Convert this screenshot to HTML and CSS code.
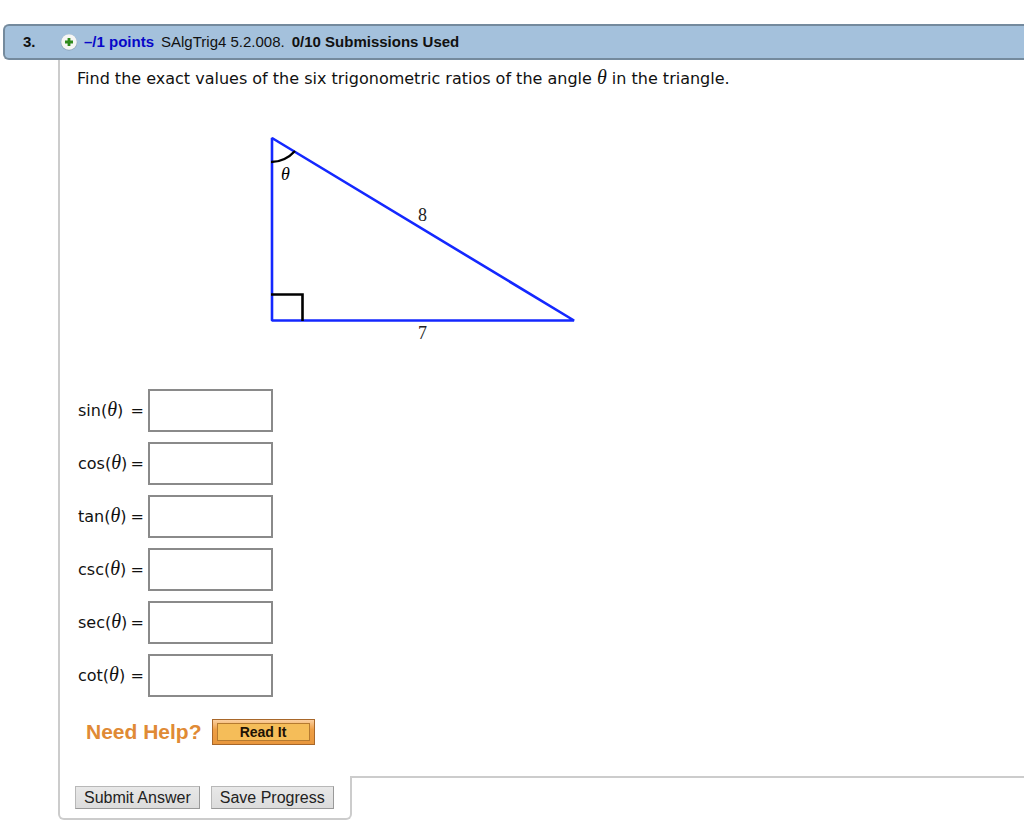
FILE: index.html
```html
<!DOCTYPE html>
<html lang="en">
<head>
<meta charset="utf-8">
<title>Question 3</title>
<link rel="stylesheet" href="styles.css">
</head>
<body>
<main class="question">
  <header class="bar">
    <span class="number">3.</span>
    <svg class="plus" viewBox="0 0 18 18" aria-hidden="true">
      <circle cx="9" cy="9.500" r="8.300" fill="#8fa8be"/>
      <circle cx="9" cy="9" r="7.800" fill="#f6f6f4"/>
      <path d="M9 5v8M5 9h8" stroke="#2f8a1c" stroke-width="2.800"/>
    </svg>
    <a class="points" href="#points">–/1 points</a>
    <span class="source">SAlgTrig4 5.2.008.</span>
    <strong class="used">0/10 Submissions Used</strong>
  </header>
  <form class="body">
    <div class="content">
      <p class="prompt">Find the exact values of the six trigonometric ratios of the angle <i class="theta">θ</i> in the triangle.</p>
      <svg class="figure" viewBox="0 0 320 224" role="img" aria-label="Right triangle with hypotenuse 8, base 7 and top angle theta">
        <path d="M12 9V191.500H314Z" fill="none" stroke="#1428ff" stroke-width="2.600" stroke-linejoin="bevel"/>
        <path d="M11 33Q25 33 35 22" fill="none" stroke="#000" stroke-width="2.400"/>
        <path d="M11 165.500H42.500V192" fill="none" stroke="#000" stroke-width="2.600"/>
        <text class="fig-theta" x="21" y="51">θ</text>
        <text class="fig-num" x="158" y="92">8</text>
        <text class="fig-num" x="158" y="210">7</text>
      </svg>
      <div class="answers">
        <label for="sin"><span>sin(<i class="theta">θ</i>)</span><span>=</span></label><input id="sin" type="text">
        <label for="cos"><span>cos(<i class="theta">θ</i>)</span><span>=</span></label><input id="cos" type="text">
        <label for="tan"><span>tan(<i class="theta">θ</i>)</span><span>=</span></label><input id="tan" type="text">
        <label for="csc"><span>csc(<i class="theta">θ</i>)</span><span>=</span></label><input id="csc" type="text">
        <label for="sec"><span>sec(<i class="theta">θ</i>)</span><span>=</span></label><input id="sec" type="text">
        <label for="cot"><span>cot(<i class="theta">θ</i>)</span><span>=</span></label><input id="cot" type="text">
      </div>
      <div class="help">
        <span class="help-title">Need Help?</span>
        <button class="read" type="button"><span>Read It</span></button>
      </div>
    </div>
    <div class="bottom">
      <div class="actions">
        <button class="action" type="button">Submit Answer</button>
        <button class="action" type="button">Save Progress</button>
      </div>
      <div class="rule"></div>
    </div>
  </form>
</main>
</body>
</html>
```
FILE: styles.css
```css
* { box-sizing: border-box; }
body {
  margin: 0;
  background: #fff;
  color: #111;
  font: 16px/24px "DejaVu Sans", Verdana, sans-serif;
}
.question { padding: 24px 0 12px 3px; }
.bar {
  display: flex;
  align-items: center;
  height: 36px;
  padding-left: 18px;
  border: 2px solid #748a9d;
  border-right: 0;
  border-radius: 6px 0 0 6px;
  background: #a4c1dc;
  font: 15px/20px "Liberation Sans", Arial, sans-serif;
  white-space: nowrap;
}
.number { width: 37px; font-weight: bold; }
.plus { width: 18px; height: 18px; margin-right: 6px; }
.points { color: #0808c8; font-weight: bold; text-decoration: none; }
.source { margin: 0 7px; }
.body { margin-left: 55px; }
.content {
  padding: 7px 0 31px 17px;
  border-left: 2px solid #ccc;
}
.prompt { margin: 0; height: 24px; line-height: 24px; }
.theta { font: italic 20px/20px "Liberation Serif", "Times New Roman", serif; }
.figure {
  display: block;
  width: 320px;
  height: 224px;
  margin: 38px 0 36px 183px;
}
.fig-theta { font: italic 18px "Liberation Serif", serif; }
.fig-num { font: 18px "Liberation Serif", serif; fill: #222; }
.answers {
  display: grid;
  grid-template-columns: 66px 125px;
  grid-auto-rows: 43px;
  column-gap: 4px;
  row-gap: 10px;
  padding-left: 1px;
  align-items: center;
}
.answers label { display: flex; justify-content: space-between; align-items: baseline; }
.answers input {
  width: 100%;
  height: 43px;
  padding: 4px 8px;
  border: 2px solid #8a8a8a;
  background: #fff;
  font: inherit;
}
.help { display: flex; align-items: center; gap: 10px; margin: 22px 0 0 9px; }
.help-title { color: #e08a35; font: bold 21px/26px "Liberation Sans", Arial, sans-serif; }
.read {
  width: 103px;
  height: 26px;
  padding: 3px 4px;
  border: 1px solid #a8672a;
  background: linear-gradient(#fbd0a0, #ee9f45 40%, #e8963c);
  color: #1c1204;
  font: bold 14px/16px "Liberation Sans", Arial, sans-serif;
}
.read span { display: block; border: 1px solid #b57a30; background: #f5bd59; }
.bottom { display: flex; }
.actions {
  display: flex;
  gap: 11px;
  padding: 10px 16px 9px 15px;
  border: solid #ccc;
  border-width: 0 2px 2px;
  border-radius: 0 0 6px 6px;
}
.rule { flex: 1; border-top: 2px solid #ccc; }
.action {
  height: 23px;
  padding: 0 8px;
  border: 1px solid #b8b8b8;
  border-right-color: #999;
  border-bottom-color: #999;
  background: linear-gradient(#e8e8e8, #dcdcdc);
  color: #222;
  font: 16px/20px "Liberation Sans", Arial, sans-serif;
  white-space: nowrap;
}
```
